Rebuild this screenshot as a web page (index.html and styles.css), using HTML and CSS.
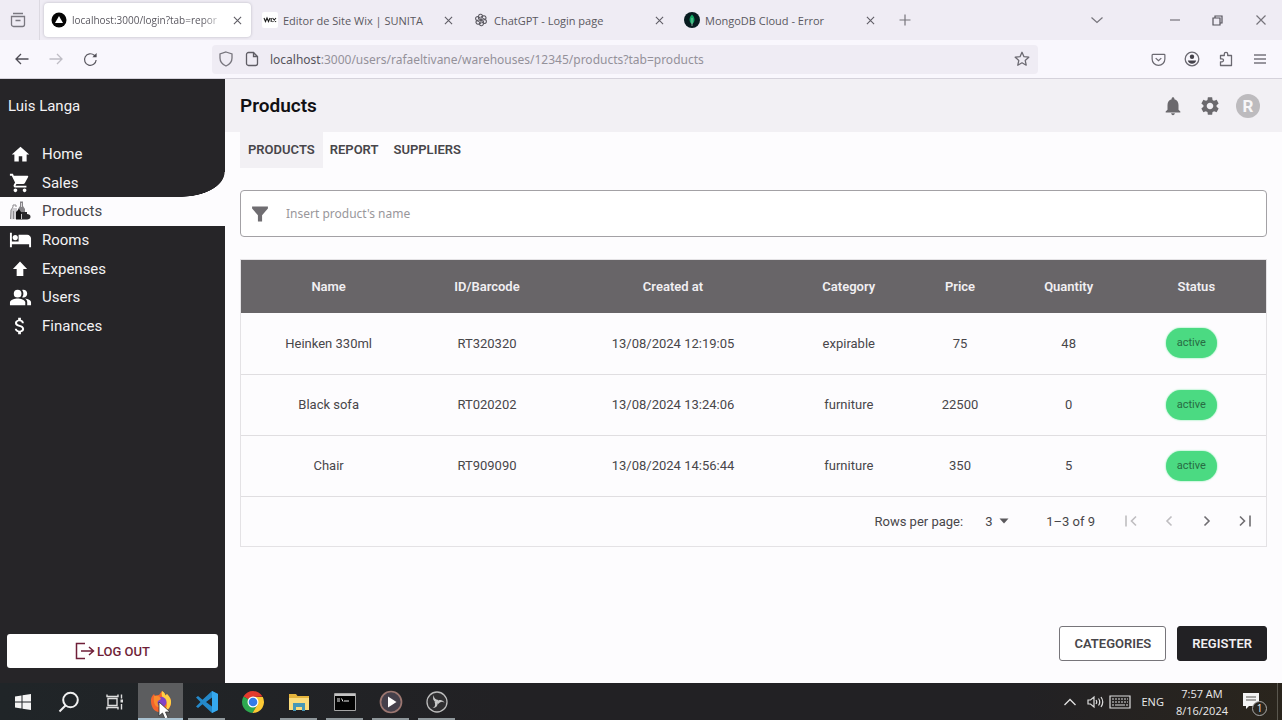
FILE: index.html
```html
<!DOCTYPE html>
<html lang="en">
<head>
<meta charset="utf-8">
<title>Products</title>
<link rel="stylesheet" href="styles.css">
</head>
<body>
<header class="browser">
  <div class="tabstrip">
    <button class="recent" aria-label="Recent browsing"><svg width="16" height="16" viewBox="0 0 16 16" fill="none" stroke="#7a7880" stroke-width="1.3"><path d="M3 1.500h10M1.500 4.500h13v8a2 2 0 0 1-2 2h-9a2 2 0 0 1-2-2zM5.500 8.500h5"/></svg></button>
    <div class="tab tab-current">
      <svg width="16" height="16" viewBox="0 0 16 16"><circle cx="8" cy="8" r="7.500" fill="#050505"/><path d="M8 4l4 7H4z" fill="#fff"/></svg>
      <span class="tab-title tab-fade">localhost:3000/login?tab=repor</span>
      <button class="close" aria-label="Close tab"><svg width="9" height="9" viewBox="0 0 10 10"><path d="M1 1l8 8M9 1L1 9"/></svg></button>
    </div>
    <div class="tab">
      <svg width="16" height="16" viewBox="0 0 16 16"><rect width="16" height="16" rx="2" fill="#fff"/><path d="M2 6l1.500 3.500L5 6l1.500 3.500L8 6M9.200 6v4M10.500 6l3.500 4M14 6l-3.500 4" fill="none" stroke="#222" stroke-width="1.100"/></svg>
      <span class="tab-title">Editor de Site Wix | SUNITA</span>
      <button class="close" aria-label="Close tab"><svg width="9" height="9" viewBox="0 0 10 10"><path d="M1 1l8 8M9 1L1 9"/></svg></button>
    </div>
    <div class="tab">
      <svg width="16" height="16" viewBox="-2 -2 20 20" fill="none" stroke="#5c5a62" stroke-width="1.400"><g id="petals"><path d="M8 8V4.500l3-1.700a2.600 2.600 0 0 1 3 3.700L11 8.200"/></g><use href="#petals" transform="rotate(60 8 8)"/><use href="#petals" transform="rotate(120 8 8)"/><use href="#petals" transform="rotate(180 8 8)"/><use href="#petals" transform="rotate(240 8 8)"/><use href="#petals" transform="rotate(300 8 8)"/></svg>
      <span class="tab-title">ChatGPT - Login page</span>
      <button class="close" aria-label="Close tab"><svg width="9" height="9" viewBox="0 0 10 10"><path d="M1 1l8 8M9 1L1 9"/></svg></button>
    </div>
    <div class="tab">
      <svg width="16" height="16" viewBox="0 0 16 16"><circle cx="8" cy="8" r="8" fill="#081c20"/><path d="M8 2.500c3.300 3.500 3.300 7 0 10-3.300-3-3.300-6.500 0-10z" fill="#14a765"/><path d="M8 6v8" stroke="#b9d9c8" stroke-width=".7"/></svg>
      <span class="tab-title">MongoDB Cloud - Error</span>
      <button class="close" aria-label="Close tab"><svg width="9" height="9" viewBox="0 0 10 10"><path d="M1 1l8 8M9 1L1 9"/></svg></button>
    </div>
    <button class="newtab" aria-label="New tab"><svg width="12" height="12" viewBox="0 0 12 12"><path d="M6 .5v11M.5 6h11" stroke="#76747b" stroke-width="1.200"/></svg></button>
    <div class="window-controls">
      <button aria-label="List all tabs"><svg width="12" height="12" viewBox="0 0 12 12"><path d="M.5 3.500L6 8.500l5.500-5"/></svg></button>
      <button aria-label="Minimize"><svg width="10" height="10" viewBox="0 0 10 10"><path d="M0 5h10"/></svg></button>
      <button aria-label="Restore"><svg width="11" height="11" viewBox="0 0 11 11"><path d="M1 3h7v7H1zM3 3V1h7v7H8" stroke="#55535b" stroke-width="1.200"/></svg></button>
      <button aria-label="Close"><svg width="10" height="10" viewBox="0 0 10 10"><path d="M.5 .5l9 9M9.500 .5l-9 9"/></svg></button>
    </div>
  </div>
  <div class="toolbar">
    <div class="nav-buttons">
      <button aria-label="Back"><svg width="14" height="14" viewBox="0 0 14 14" stroke="#4f4d55"><path d="M13.500 7H1M6 2L1 7l5 5"/></svg></button>
      <button aria-label="Forward"><svg width="14" height="14" viewBox="0 0 14 14" stroke="#bfbdc5"><path d="M.5 7H13M8 2l5 5-5 5"/></svg></button>
      <button aria-label="Reload"><svg width="15" height="15" viewBox="0 0 16 16" stroke="#5c5a62"><path d="M14 8.500A6.200 6.200 0 1 1 12 3.500L13.500 5"/><path d="M14.500 1v4.500H10z" fill="#4f4d55" stroke="none"/></svg></button>
    </div>
    <div class="address">
      <svg width="16" height="16" viewBox="0 0 16 16" stroke="#77757d"><path d="M8 1l6 2v4c0 4-2.500 6.500-6 8-3.500-1.500-6-4-6-8V3z"/></svg>
      <svg width="14" height="16" viewBox="0 0 14 16" stroke="#5f5d65"><path d="M1.500 3.500a2 2 0 0 1 2-2H8.500l4 4v7a2 2 0 0 1-2 2h-7a2 2 0 0 1-2-2zM8.500 1.500v4h4"/></svg>
      <span class="url"><b>localhost</b>:3000/users/rafaeltivane/warehouses/12345/products?tab=products</span>
      <button aria-label="Bookmark"><svg width="16" height="16" viewBox="0 0 16 16" stroke="#6b6971"><path d="M8 1.300l2 4.400 4.800.5-3.600 3.200 1 4.800L8 11.800l-4.200 2.400 1-4.800L1.200 6.200 6 5.700z" stroke-linejoin="round"/></svg></button>
    </div>
    <div class="tools">
      <button aria-label="Pocket"><svg width="15" height="15" viewBox="0 0 16 16" stroke="#6b6971"><path d="M2 2.500h12a.8.800 0 0 1 .8.800V7.500a6.500 6.500 0 0 1-13.600 0V3.300A.8.800 0 0 1 2 2.500zM5 6.500l3 2.800 3-2.800"/></svg></button>
      <button aria-label="Account"><svg width="16" height="16" viewBox="0 0 16 16" stroke="#6b6971"><circle cx="8" cy="8" r="6.800"/><circle cx="8" cy="5.800" r="2.200" fill="#44424a" stroke="none"/><path d="M3.800 9.500h8.400C11.500 12 10 12.700 8 12.700S4.500 12 3.800 9.500z" fill="#44424a" stroke="none"/></svg></button>
      <button aria-label="Extensions"><svg width="16" height="16" viewBox="0 0 16 16" stroke="#6b6971"><path d="M2.500 4.500h3.800V3a1.700 1.700 0 0 1 3.400 0v1.500h3.800v10h-11v-3.700H4a1.500 1.500 0 0 0 0-3H2.500z" stroke-linejoin="round"/></svg></button>
      <button aria-label="Menu"><svg width="14" height="14" viewBox="0 0 14 14" stroke="#77757d"><path d="M1 3h12M1 7h12M1 11h12"/></svg></button>
    </div>
  </div>
</header>

<div class="app">
  <aside class="sidebar">
    <div class="user">Luis Langa</div>
    <nav class="menu">
      <a href="#home"><svg width="21" height="21" viewBox="0 0 24 24"><path d="M10 20v-6h4v6h5v-8h3L12 3 2 12h3v8z"/></svg>Home</a>
      <a href="#sales"><svg width="22" height="22" viewBox="0 0 24 24"><path d="M7 18c-1.100 0-1.990.9-1.990 2S5.900 22 7 22s2-.9 2-2-.9-2-2-2zM1 2v2h2l3.600 7.590-1.350 2.450c-.16.28-.25.61-.25.96 0 1.100.9 2 2 2h12v-2H7.420c-.14 0-.25-.11-.25-.25l.03-.12.9-1.630h7.450c.75 0 1.410-.41 1.750-1.030l3.580-6.490c.08-.14.12-.31.12-.48 0-.55-.45-1-1-1H5.210l-.94-2H1zm16 16c-1.100 0-1.990.9-1.990 2s.89 2 1.990 2 2-.9 2-2-.9-2-2-2z"/></svg>Sales</a>
      <a href="#products" class="active" aria-current="page"><svg width="22" height="22" viewBox="0 0 22 22"><path d="M2 10l2-2h4v11H1.500z" fill="#cfcdd1"/><path d="M1.500 19l.5-9 2-3V5h3v2M4.500 11v8" fill="none" stroke="#8b898d"/><path d="M11 1.500h3V6l2 3v4h-7V9l2-3z" fill="#858387"/><path d="M12 3h1v4h-1z" fill="#d9d7da"/><path d="M7 12l3-3 2 3v7.500H7z" fill="#141315"/><path d="M12 12h6v2c2 0 3.500 1 3.500 2.800S20 19.500 18 19.500h-6z" fill="#29282b"/><path d="M12.500 14v5M1.500 19.500h5" stroke="#efedf0" stroke-width=".8"/></svg>Products</a>
      <a href="#rooms"><svg width="23" height="23" viewBox="0 0 24 24"><path d="M1 5h2v9h7V7h9c2.200 0 4 1.800 4 4v9h-2v-3H3v3H1z"/><circle cx="6.500" cy="10" r="2.700"/></svg>Rooms</a>
      <a href="#expenses"><svg width="20" height="20" viewBox="0 0 24 24"><path d="M12 3l-8.500 9H8v8.500h8V12h4.500z"/></svg>Expenses</a>
      <a href="#users"><svg width="23" height="23" viewBox="0 0 24 24"><path d="M16.670 13.130C18.040 14.060 19 15.320 19 17v3h4v-3c0-2.180-3.570-3.470-6.330-3.870zM15 12c2.210 0 4-1.790 4-4s-1.790-4-4-4c-.47 0-.91.1-1.330.24C14.500 5.270 15 6.580 15 8s-.5 2.730-1.330 3.760c.42.14.86.24 1.330.24zM9 13c-2.670 0-8 1.340-8 4v3h16v-3c0-2.660-5.330-4-8-4z"/><circle cx="9" cy="8" r="4"/></svg>Users</a>
      <a href="#finances"><svg width="22" height="22" viewBox="0 0 24 24"><path d="M11.800 10.900c-2.270-.59-3-1.200-3-2.150 0-1.090 1.010-1.850 2.700-1.850 1.780 0 2.440.85 2.500 2.100h2.210c-.07-1.720-1.120-3.300-3.210-3.810V3h-3v2.160c-1.940.42-3.500 1.680-3.500 3.610 0 2.310 1.910 3.460 4.700 4.130 2.500.6 3 1.480 3 2.410 0 .69-.49 1.790-2.700 1.790-2.060 0-2.870-.92-2.980-2.100h-2.200c.12 2.190 1.760 3.420 3.680 3.830V21h3v-2.150c1.950-.37 3.500-1.500 3.500-3.550 0-2.840-2.430-3.810-4.700-4.400z"/></svg>Finances</a>
    </nav>
    <button class="logout"><svg width="20" height="18" viewBox="0 0 20 18" fill="none" stroke="#6f1f38" stroke-width="1.500"><path d="M10 1.500H1.500v15H10M6 9h12.500M14 5l4.500 4-4.500 4"/></svg>LOG OUT</button>
  </aside>

  <main class="main">
    <div class="topbar">
      <h1>Products</h1>
      <div class="actions">
        <button aria-label="Notifications"><svg width="22" height="22" viewBox="0 0 24 24"><path d="M12 22c1.100 0 2-.9 2-2h-4c0 1.100.89 2 2 2zm6-6v-5c0-3.070-1.640-5.640-4.500-6.320V4c0-.83-.67-1.500-1.500-1.500s-1.500.67-1.500 1.500v.68C7.630 5.360 6 7.920 6 11v5l-2 2v1h16v-1l-2-2z"/></svg></button>
        <button aria-label="Settings"><svg width="22" height="22" viewBox="0 0 24 24"><path d="M19.140 12.940c.04-.3.06-.61.06-.94 0-.32-.02-.64-.07-.94l2.030-1.580c.18-.14.23-.41.12-.61l-1.920-3.320c-.12-.22-.37-.29-.59-.22l-2.390.96c-.5-.38-1.030-.7-1.620-.94l-.36-2.540c-.04-.24-.24-.41-.48-.41h-3.840c-.24 0-.43.17-.47.41l-.36 2.540c-.59.24-1.130.57-1.620.94l-2.390-.96c-.22-.08-.47 0-.59.22L2.740 8.870c-.12.21-.08.47.12.61l2.030 1.580c-.05.3-.09.63-.09.94s.02.64.07.94l-2.030 1.580c-.18.14-.23.41-.12.61l1.920 3.320c.12.22.37.29.59.22l2.390-.96c.5.38 1.030.7 1.620.94l.36 2.540c.05.24.24.41.48.41h3.840c.24 0 .44-.17.47-.41l.36-2.540c.59-.24 1.130-.56 1.620-.94l2.390.96c.22.08.47 0 .59-.22l1.920-3.320c.12-.22.07-.47-.12-.61l-2.010-1.580zM12 15.600c-1.980 0-3.600-1.620-3.600-3.600s1.620-3.600 3.600-3.600 3.600 1.620 3.600 3.600-1.620 3.600-3.600 3.600z"/></svg></button>
        <button class="avatar">R</button>
      </div>
    </div>
    <div class="content">
      <nav class="sections">
        <a href="#products" class="selected">PRODUCTS</a>
        <a href="#report">REPORT</a>
        <a href="#suppliers">SUPPLIERS</a>
      </nav>
      <label class="search">
        <svg width="20" height="20" viewBox="0 0 24 24"><path d="M2.500 3h19v2.500L14.500 13.500V21h-5v-7.500l-7-8z"/></svg>
        <input type="text" placeholder="Insert product's name" aria-label="Product name">
      </label>
      <div class="panel">
        <table>
          <colgroup><col class="c-name"><col class="c-id"><col class="c-date"><col class="c-cat"><col class="c-price"><col class="c-qty"><col class="c-status"></colgroup>
          <thead><tr><th>Name</th><th>ID/Barcode</th><th>Created at</th><th>Category</th><th>Price</th><th>Quantity</th><th>Status</th></tr></thead>
          <tbody>
            <tr><td>Heinken 330ml</td><td>RT320320</td><td>13/08/2024 12:19:05</td><td>expirable</td><td>75</td><td>48</td><td><span class="badge">active</span></td></tr>
            <tr><td>Black sofa</td><td>RT020202</td><td>13/08/2024 13:24:06</td><td>furniture</td><td>22500</td><td>0</td><td><span class="badge">active</span></td></tr>
            <tr><td>Chair</td><td>RT909090</td><td>13/08/2024 14:56:44</td><td>furniture</td><td>350</td><td>5</td><td><span class="badge">active</span></td></tr>
          </tbody>
        </table>
        <div class="pager">
          <label for="rows">Rows per page:</label>
          <div class="rows"><select id="rows"><option>3</option><option>6</option></select><svg width="10" height="6" viewBox="0 0 10 6"><path d="M.5 .5h9L5 5.500z" fill="#5b595d"/></svg></div>
          <span class="range">1–3 of 9</span>
          <div class="pages">
            <button disabled aria-label="First page"><svg width="14" height="14" viewBox="0 0 14 14"><path d="M2 1.500v11M12 2.500L7.500 7l4.500 4.500"/></svg></button>
            <button disabled aria-label="Previous page"><svg width="14" height="14" viewBox="0 0 14 14"><path d="M9.500 2.500L5 7l4.500 4.500"/></svg></button>
            <button aria-label="Next page"><svg width="14" height="14" viewBox="0 0 14 14"><path d="M4.500 2.500L9 7l-4.500 4.500"/></svg></button>
            <button aria-label="Last page"><svg width="14" height="14" viewBox="0 0 14 14"><path d="M2 2.500L6.500 7 2 11.500M12 1.500v11"/></svg></button>
          </div>
        </div>
      </div>
      <div class="buttons">
        <button class="btn">CATEGORIES</button>
        <button class="btn btn-dark">REGISTER</button>
      </div>
    </div>
  </main>
</div>

<footer class="taskbar">
  <div class="apps">
    <button aria-label="Start"><svg width="18" height="18" viewBox="0 0 18 18" fill="#f4f4f4"><path d="M1 3.500l6.500-1v6H1zM8.500 2.300L17 1v7.500H8.500zM1 9.500h6.500v6L1 14.600zM8.500 9.500H17V17l-8.500-1.200z"/></svg></button>
    <button aria-label="Search"><svg width="22" height="22" viewBox="0 0 22 22" fill="none" stroke="#f0f0f0" stroke-width="2"><circle cx="12.500" cy="9" r="7.300"/><path d="M7.500 14.500L1.500 20.500"/></svg></button>
    <button aria-label="Task view"><svg width="18" height="18" viewBox="0 0 18 18" fill="none" stroke="#dedede" stroke-width="1.400"><path d="M2 5.500h9v7H2zM1 1.500v2h11v-2M1 16.500v-2h11v2M15.500 1.500v4M15.500 11v5.500"/><path d="M14.500 6.500h2.500v3h-2.500z" fill="#dedede" stroke="none"/></svg></button>
    <button class="running current" aria-label="Firefox"><svg width="24" height="24" viewBox="0 0 24 24"><path d="M2 12c-.5-4 1-6 3-8l1 2c2-1 3-1 4-1l3-4c3 2 3 3 3.500 4.500L18 4c3 3 4.500 6 4 9-.6 6-5 9.500-10 9.500S2.500 19 2 12z" fill="#f4642c"/><path d="M13 1c3 2 3 3 3.500 4.500L18 4c3 3 4.500 6 4 9-.5 4-3 7-6 8 3-5 2-10-1-12-2-2-3-4-2-8z" fill="#ffd044"/><circle cx="12.500" cy="12" r="5" fill="#8142c7"/><path d="M5 6c3-1 6 0 7 3l-3 2c-1 2 0 5 3 6-5 1-8-2-7-11z" fill="#fa8c2d"/></svg>
      <svg class="cursor" width="14" height="20" viewBox="0 0 14 20"><path d="M1 1v14l3.500-3 2.500 6 3-1.300-2.500-5.700H12z" fill="#fff" stroke="#333" stroke-width=".8"/></svg></button>
    <button class="running" aria-label="Visual Studio Code"><svg width="24" height="24" viewBox="0 0 24 24"><path d="M17 1l6 3v16l-6 3-9.500-8.700L3 18l-2-1.500L5.500 12 1 7.500 3 6l4.500 3.700zM17 7.500L11 12l6 4.500z" fill="#2489ca" fill-rule="evenodd"/><path d="M17 1l6 3v16l-6 3z" fill="#35a8ee"/></svg></button>
    <button aria-label="Chrome"><svg width="24" height="24" viewBox="0 0 24 24"><path d="M12 12L2.500 6.500A11 11 0 0 1 21.500 6.500L12 7z" fill="#e33b2e"/><path d="M12 12L2.500 6.500A11 11 0 0 0 11.500 23l5-8.500z" fill="#2da94f"/><path d="M12 7h9.800A11 11 0 0 1 11.500 23l5-8.500z" fill="#fcc934"/><circle cx="12" cy="12" r="5.500" fill="#fff"/><circle cx="12" cy="12" r="4.300" fill="#347be8"/></svg></button>
    <button class="running" aria-label="File Explorer"><svg width="22" height="20" viewBox="0 0 22 20"><path d="M1 2h7l1.500 2H21v13H1z" fill="#e5b43c"/><path d="M1 6h20v12H1z" fill="#fbdc7c"/><path d="M5 11h12v8h-3v-4H8v4H5z" fill="#4798b6"/></svg></button>
    <button class="running" aria-label="Command Prompt"><svg width="22" height="18" viewBox="0 0 22 18"><path d="M.5 .5h21v17H.5z" fill="#030303" stroke="#a4a4a4"/><path d="M1 1h20v2H1z" fill="#c5c5c5"/><path d="M3 6h3M3 8h3M7.500 5.500l1.500 3M10 8h5" stroke="#ececec"/></svg></button>
    <button class="running" aria-label="Media Player"><svg width="24" height="24" viewBox="0 0 24 24"><circle cx="12" cy="12" r="10.500" fill="#45404b" stroke="#9c7771" stroke-width="1.700"/><path d="M9 6.500l8.500 5.500L9 17.500z" fill="#fff"/></svg></button>
    <button class="running" aria-label="OBS Studio"><svg width="22" height="22" viewBox="0 0 22 22" fill="none" stroke="#bdbdbd" stroke-width="1.300"><circle cx="11" cy="11" r="10" fill="#302f31"/><g id="blade"><path d="M11 11.500C7.500 10.500 6 7.500 8 4c-.5 3 1.500 4.500 4.500 5z" fill="#c9c9c9" stroke="none"/></g><use href="#blade" transform="rotate(120 11 11)"/><use href="#blade" transform="rotate(240 11 11)"/></svg></button>
  </div>
  <div class="tray">
    <button aria-label="Show hidden icons"><svg width="12" height="8" viewBox="0 0 12 8" fill="none" stroke="#e2e2e2" stroke-width="1.300"><path d="M.5 7L6 1.500 11.500 7"/></svg></button>
    <button aria-label="Volume"><svg width="17" height="14" viewBox="0 0 17 14" fill="none" stroke="#dedede" stroke-width="1.200"><path d="M1 5h2.500L7 2v10L3.500 9H1zM9 5q1.500 2 0 4M11.500 3.500q2.500 3.500 0 7M14 2q3.500 5 0 10"/></svg></button>
    <button aria-label="Keyboard"><svg width="22" height="14" viewBox="0 0 22 14" fill="none" stroke="#dedede" stroke-width="1.200"><path d="M1 1h20v12H1z"/><path d="M3 4h16M3 7h16" stroke-dasharray="2 1"/><path d="M3 10h2M6 10h10M17 10h2"/></svg></button>
    <span class="lang">ENG</span>
    <div class="clock"><span>7:57 AM</span><span>8/16/2024</span></div>
    <button class="notify" aria-label="Notifications"><svg width="24" height="24" viewBox="0 0 24 24"><path d="M2 3h16v13H8l-3 3v-3H2z" fill="#f4f4f4"/><path d="M5 7h10M5 10h10" stroke="#55534f"/></svg><span class="count">1</span></button>
  </div>
</footer>
</body>
</html>
```
FILE: styles.css
```css
* { box-sizing: border-box; }
body {
  margin: 0;
  min-height: 100vh;
  display: flex;
  flex-direction: column;
  font-family: Roboto, "Liberation Sans", sans-serif;
  font-size: 13px;
  color: #48464a;
  background: #fdfcfe;
}
button { font: inherit; color: inherit; border: 0; padding: 0; background: none; display: flex; align-items: center; justify-content: center; }
a { color: inherit; text-decoration: none; }
svg { flex: none; display: block; }

/* Browser chrome */
.browser { font-family: "Noto Sans", sans-serif; color: #5a5860; }
.tabstrip { display: flex; align-items: center; height: 40px; background: #efecf4; }
.recent { width: 40px; height: 40px; padding-right: 3px; border-right: 1px solid #dcd9e1; margin-right: 4px; }
.tab { display: flex; align-items: center; gap: 5px; width: 207px; height: 34px; margin-right: 4px; padding: 0 8px 0 7px; border-radius: 4px; }
.tab-current { background: #fff; box-shadow: 0 0 3px #bab7c0; }
.tab-title { flex: 1; min-width: 0; overflow: hidden; white-space: nowrap; font-family: "Open Sans", sans-serif; font-size: 11px; }
.tab-current .tab-title { font-size: 10px; }
.tab-fade { mask-image: linear-gradient(to right, #000 84%, transparent); }
.close { width: 12px; height: 20px; }
.close svg { fill: none; stroke: #5f5d65; stroke-width: 1.2; }
.newtab { width: 34px; height: 32px; }
.window-controls { display: flex; margin-left: auto; }
.window-controls button { width: 43px; height: 40px; }
.window-controls button:first-child { margin-right: 35px; }
.window-controls svg { fill: none; stroke: #76747b; stroke-width: 1.2; }
.toolbar { display: flex; align-items: center; height: 39px; background: #f9f7fd; border-bottom: 1px solid #d5d2db; }
.toolbar svg { fill: none; stroke-width: 1.3; }
.nav-buttons { display: flex; width: 212px; padding-left: 5px; }
.nav-buttons button { width: 34px; height: 32px; }
.address { flex: 1; display: flex; align-items: center; gap: 11px; height: 29px; padding: 0 8px 0 6px; border-radius: 4px; background: #efecf4; }
.url { flex: 1; font-size: 12px; color: #94919a; white-space: nowrap; }
.url b { font-weight: 400; color: #55535b; }
.tools { display: flex; justify-content: flex-end; width: 244px; padding-right: 5px; }
.tools button { width: 34px; height: 32px; }

/* Application */
.app { flex: 1; display: flex; }
.sidebar { display: flex; flex-direction: column; flex: none; width: 225px; padding: 15px 0; background: #262528; color: #f3f2f4; font-size: 15px; }
.user { padding-left: 8px; line-height: 24px; margin-bottom: 22px; }
.menu { display: grid; grid-auto-rows: 1fr; min-height: 200px; }
.menu a { position: relative; display: grid; grid-template-columns: 24px 1fr; align-items: center; gap: 10px; padding-left: 8px; }
.menu svg { justify-self: center; fill: #fff; }
.menu .active { background: #fdfcfe; color: #48464a; }
.menu .active::before {
  content: "";
  position: absolute;
  right: 0;
  bottom: 100%;
  width: 44px;
  height: 25px;
  background: radial-gradient(44px 25px at 0 0, transparent 98%, #fdfcfe);
}
.logout { margin: auto 7px 0; height: 34px; border-radius: 3px; background: #fff; color: #6f1f38; font-size: 13px; font-weight: 500; gap: 2px; }

.main { flex: 1; display: flex; flex-direction: column; min-width: 0; }
.topbar { display: flex; align-items: center; justify-content: space-between; height: 53px; padding: 0 22px 0 15px; background: #f2f0f4; }
h1 { margin: 0; font-size: 19px; font-weight: 600; color: #111013; }
.actions { display: flex; align-items: center; gap: 15px; }
.actions svg { fill: #6b696d; }
.avatar { width: 24px; height: 24px; border-radius: 50%; background: #bdbbbe; color: #f7f6f8; font-size: 17px; font-weight: 700; }
.content { flex: 1; display: flex; flex-direction: column; padding: 0 15px 22px; }
.sections { display: flex; }
.sections a { height: 36px; line-height: 36px; padding: 0 8px 0 7px; font-weight: 600; }
.sections .selected { background: #f2f0f4; padding: 0 8px; }
.search { display: flex; align-items: center; gap: 16px; height: 47px; margin: 22px 0; padding: 0 9px; border: 1px solid #a3a1a5; border-radius: 4px; background: #fff; }
.search svg { fill: #6f6d71; }
.search input { flex: 1; border: 0; outline: 0; padding: 0; background: none; font-family: "Noto Sans", sans-serif; font-size: 12px; color: #48464a; }
.search input::placeholder { color: #99979b; opacity: 1; }
.panel { border: 1px solid #e4e2e5; }
table { width: 100%; table-layout: fixed; border-collapse: collapse; text-align: center; }
.c-name { width: 17.1%; }
.c-id { width: 13.8%; }
.c-date { width: 22.5%; }
.c-cat { width: 11.8%; }
.c-price { width: 9.9%; }
.c-qty { width: 11.3%; }
.c-status { width: 13.6%; }
th { height: 53px; padding: 0; background: #686568; color: #f1eff2; font-weight: 600; }
td { height: 61px; padding: 0; border-bottom: 1px solid #e0dee1; }
.badge { display: inline-block; margin-right: 10px; padding: 0 11px; border-radius: 15px; line-height: 30px; font-size: 11px; color: #286b43; background: #4bda82; box-shadow: 0 0 2px #5fe793; }
.pager { display: flex; align-items: center; justify-content: flex-end; height: 49px; padding-right: 2px; }
.rows { display: flex; align-items: center; position: relative; margin-left: 22px; }
.rows select { appearance: none; width: 24px; border: 0; padding: 0; background: none; font: inherit; color: inherit; }
.rows svg { position: absolute; right: 0; pointer-events: none; }
.range { margin-left: 37px; }
.pages { display: flex; margin-left: 17px; }
.pages button { width: 38px; height: 38px; }
.pages svg { fill: none; stroke: #6f6d71; stroke-width: 1.6; }
.pages button:disabled svg { stroke: #bfbdc0; }
.buttons { display: flex; justify-content: flex-end; gap: 11px; margin-top: auto; }
.btn { height: 35px; padding: 0 14px; border: 1px solid #77757a; border-radius: 3px; background: #fff; font-weight: 600; }
.btn-dark { border-color: #222124; background: #222124; color: #f1eff2; }

/* Desktop taskbar */
.taskbar { display: flex; justify-content: space-between; height: 37px; background: linear-gradient(to right, #202528, #222124 40%, #222124 80%, #2a251d); color: #ebebeb; font-family: "Open Sans", sans-serif; font-size: 11px; }
.apps { display: flex; gap: 1px; }
.apps button { position: relative; width: 45px; height: 37px; }
.running::after { content: ""; position: absolute; left: 4px; right: 4px; bottom: 0; height: 2px; background: #8f979b; }
.current { background: #5c5d5f; }
.current::after { left: 0; right: 0; background: #a9c2d1; }
.cursor { position: absolute; left: 20px; top: 18px; }
.tray { display: flex; align-items: center; padding-right: 4px; }
.tray button { width: 22px; height: 37px; margin-right: 3px; }
.lang { margin: 0 12px 0 7px; }
.clock { display: flex; flex-direction: column; align-items: center; line-height: 17px; }
.tray .notify { position: relative; width: 50px; margin: 0; border-right: 1px solid #5a574f; }
.count { position: absolute; left: 24px; top: 18px; width: 15px; height: 15px; border: 1px solid #aaa; border-radius: 50%; background: #2a261f; font-size: 10px; line-height: 13px; text-align: center; }
```
